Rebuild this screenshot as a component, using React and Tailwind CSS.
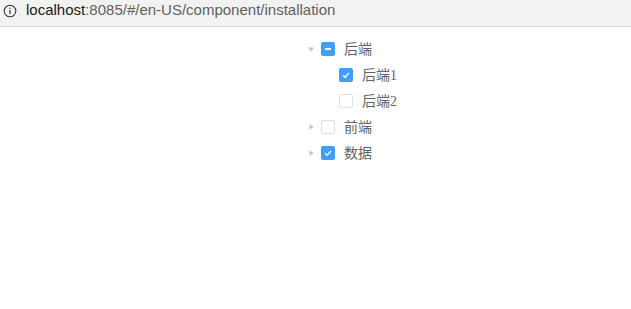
import { useState } from 'react'

function Checkbox({ state }) {
  if (state === 'checked') {
    return (
      <span className="inline-flex shrink-0 w-[14px] h-[14px] rounded-[2px] bg-[#409eff] border border-[#409eff] items-center justify-center">
        <svg width="10" height="10" viewBox="0 0 10 10">
          <path d="M2 5.2 L4.2 7.2 L8 2.8" fill="none" stroke="#fff" strokeWidth="1.3" />
        </svg>
      </span>
    )
  }
  if (state === 'half') {
    return (
      <span className="inline-flex shrink-0 w-[14px] h-[14px] rounded-[2px] bg-[#409eff] border border-[#409eff] items-center justify-center">
        <span className="w-[6px] h-[2px] bg-white"></span>
      </span>
    )
  }
  return <span className="inline-block shrink-0 w-[14px] h-[14px] rounded-[2px] bg-white border border-[#dcdfe6]"></span>
}

function Arrow({ open, hidden }) {
  if (hidden) return <span className="inline-block shrink-0 w-[12px] h-[12px]"></span>
  return (
    <span className="inline-flex shrink-0 w-[12px] h-[12px] items-center justify-center">
      <svg width="8" height="8" viewBox="0 0 8 8" className={open ? 'rotate-90' : ''}>
        <path d="M2.5 1 L6.5 4 L2.5 7 Z" fill="#c0c4cc" />
      </svg>
    </span>
  )
}

function Row({ level, label, state, arrow, open }) {
  return (
    <div className="h-[26px] flex items-center" style={{ paddingLeft: level * 18 }}>
      <span className="inline-flex mr-[4px]"><Arrow open={open} hidden={!arrow} /></span>
      <span className="inline-flex mr-[9px]"><Checkbox state={state} /></span>
      <span className="text-[14px] text-[#606266]">{label}</span>
    </div>
  )
}

export default function App() {
  let [rows] = useState([
    { level: 0, label: '后端', state: 'half', arrow: true, open: true },
    { level: 1, label: '后端1', state: 'checked', arrow: false },
    { level: 1, label: '后端2', state: 'none', arrow: false },
    { level: 0, label: '前端', state: 'none', arrow: true, open: false },
    { level: 0, label: '数据', state: 'checked', arrow: true, open: false },
  ])

  return (
    <div className="w-[631px] h-[309px] bg-white overflow-hidden" style={{ fontFamily: '"Liberation Serif", "Noto Sans CJK SC", serif' }}>
      <div className="h-[27px] bg-[#f2f2f2] border-b border-[#dadada] flex items-center pl-[2px]" style={{ fontFamily: '"Liberation Sans", Arial, sans-serif' }}>
        <svg width="14" height="14" viewBox="0 0 14 14" className="ml-[1px] mb-[5px]">
          <circle cx="7" cy="7" r="5.8" fill="none" stroke="#333" strokeWidth="1.1" />
          <rect x="6.4" y="6" width="1.2" height="4" fill="#333" />
          <rect x="6.4" y="3.8" width="1.2" height="1.2" fill="#333" />
        </svg>
        <span className="ml-[9px] mb-[5px] text-[15px] text-[#1a1a1a]">localhost<span className="text-[#5f5f5f]">:8085/#/en-US/component/installation</span></span>
      </div>
      <div className="pl-[305px] pt-[9px]">
        {rows.map(function (r) {
          return <Row key={r.label} {...r} />
        })}
      </div>
    </div>
  )
}
